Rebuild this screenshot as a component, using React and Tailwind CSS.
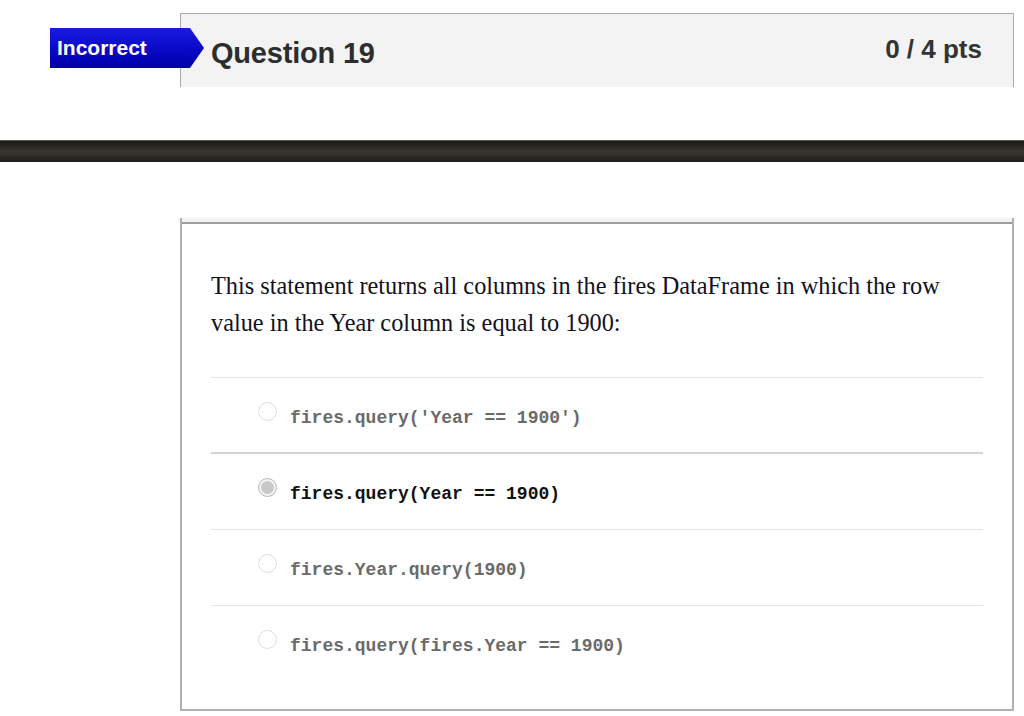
import React from "react";

const options = [
  { text: "fires.query('Year == 1900')", selected: false },
  { text: "fires.query(Year == 1900)", selected: true },
  { text: "fires.Year.query(1900)", selected: false },
  { text: "fires.query(fires.Year == 1900)", selected: false },
];

export default function App() {
  return (
    <div className="w-[1024px] h-[716px] bg-white overflow-hidden" style={{ fontFamily: '"Liberation Sans", Arial, sans-serif' }}>
      {/* Question header */}
      <div className="relative pt-[13px]">
        <div className="ml-[180px] w-[834px] h-[74px] bg-[#f3f3f3] border-t border-l border-r border-[#ababab] flex items-start justify-between pl-[30px] pr-[31px]">
          <div className="mt-[25px] text-[29px] font-bold text-[#2d2d2d] leading-none tracking-[-0.2px]">Question 19</div>
          <div className="mt-[22px] text-[26px] font-bold text-[#333] leading-none">0 / 4 pts</div>
        </div>
        {/* Incorrect badge */}
        <div className="absolute left-[50px] top-[28px] h-[40px] flex">
          <div className="w-[140px] h-[40px] bg-gradient-to-b from-[#1a1ae0] via-[#0a0ac8] to-[#0000a8] flex items-center pl-[7px] pb-[2px]">
            <span className="text-white text-[21px] font-bold leading-none">Incorrect</span>
          </div>
          <svg width="14" height="40" viewBox="0 0 14 40" className="block">
            <defs>
              <linearGradient id="ag" x1="0" y1="0" x2="0" y2="1">
                <stop offset="0" stopColor="#1a1ae0" />
                <stop offset="0.5" stopColor="#0a0ac8" />
                <stop offset="1" stopColor="#0000a8" />
              </linearGradient>
            </defs>
            <polygon points="0,0 0,40 14,20" fill="url(#ag)" />
          </svg>
        </div>
      </div>

      {/* Dark bar */}
      <div className="mt-[53px] h-[22px] bg-gradient-to-b from-[#1a1916] via-[#3a3732] to-[#1e1d1a] border-t border-[#5a5853]" />

      {/* Question card */}
      <div className="mt-[56px] ml-[180px] w-[834px] h-[493px] border-l-2 border-r-2 border-b-2 border-[#b0b0b0] flex flex-col">
        <div className="h-[4px] bg-[#f2f2f2]" />
        <div className="h-[2px] bg-[#9e9e9e]" />
        <div className="px-[29px] pt-[43px]">
          <p className="text-[24.3px] leading-[37px] text-[#111122]" style={{ fontFamily: '"Liberation Serif", "Times New Roman", serif' }}>
            This statement returns all columns in the fires DataFrame in which the row value in the Year column is equal to 1900:
          </p>
          <div className="mt-[36px] border-t border-[#e3e3e3]">
            {options.map((o, i) => (
              <div
                key={i}
                className={`h-[76px] flex items-start pl-[47px] pt-[24px] ${i < 3 ? (i === 0 ? "border-b-2 border-[#d4d4d4]" : "border-b border-[#e3e3e3]") : ""}`}
              >
                <div
                  className={`w-[19px] h-[19px] rounded-full border shrink-0 flex items-center justify-center ${
                    o.selected ? "border-[#b8b8b8] bg-[#f4f4f4]" : "border-[#dedede] bg-white"
                  }`}
                >
                  {o.selected && <div className="w-[13px] h-[13px] rounded-full bg-[#c8c8c8]" />}
                </div>
                <span
                  className={`ml-[13px] mt-[7px] text-[18px] font-bold leading-none whitespace-pre ${o.selected ? "text-[#111]" : "text-[#6a6a6a]"}`}
                  style={{ fontFamily: '"Liberation Mono", "Courier New", monospace' }}
                >
                  {o.text}
                </span>
              </div>
            ))}
          </div>
        </div>
      </div>
    </div>
  );
}
